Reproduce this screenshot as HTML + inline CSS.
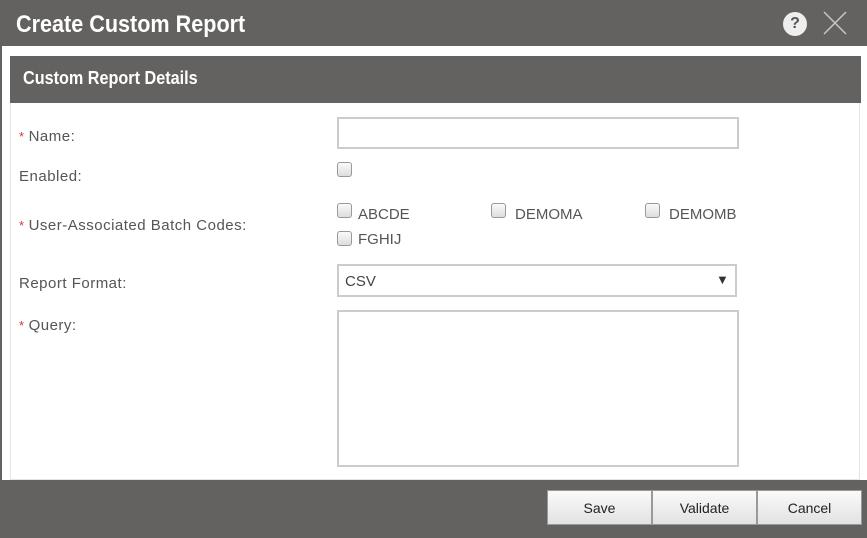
<!DOCTYPE html>
<html><head><style>
body{margin:0;width:867px;height:538px;overflow:hidden;background:#fff;font-family:"Liberation Sans",sans-serif;position:relative}
.a{position:absolute}
.lbl{position:absolute;left:19px;font-size:15px;color:#555;letter-spacing:0.5px}
.lbl b{color:#d33;font-weight:normal;font-size:13px;margin-right:4px}
.cb{position:absolute;width:13px;height:13px;border:1px solid #999;border-radius:3px;background:linear-gradient(#fafafa,#ddd)}
.ct{position:absolute;font-size:15px;color:#555}
.btn{position:absolute;top:490px;height:33px;width:103px;border:1px solid #999;background:linear-gradient(#fafafa,#e2e2e2);font-size:14px;text-align:center;line-height:35px;color:#222}
</style></head><body>
<div class="a" style="left:0;top:0;width:867px;height:46px;background:#636260"></div>
<div class="a" style="left:16px;top:11px;font-weight:bold;color:#fff;font-size:24px;transform:scaleX(0.9);transform-origin:left">Create Custom Report</div>
<div class="a" style="left:783px;top:12px;width:24px;height:24px;border-radius:50%;background:#eee;color:#555;font-weight:bold;font-size:16px;text-align:center;line-height:24px">?</div>
<svg class="a" style="left:823px;top:11px" width="24" height="24"><path d="M1 1L23 23M23 1L1 23" stroke="#c8c8c8" stroke-width="1.5"/></svg>
<div class="a" style="left:0;top:46px;width:2px;height:440px;background:#636260"></div>
<div class="a" style="left:10px;top:56px;width:850px;height:424px;border:1px solid #e4e4e4;border-top:none;box-sizing:border-box"></div>
<div class="a" style="left:10px;top:56px;width:851px;height:47px;background:#636260"></div>
<div class="a" style="left:23px;top:68px;font-weight:bold;color:#fff;font-size:18px;transform:scaleX(0.9);transform-origin:left">Custom Report Details</div>
<div class="lbl" style="top:128px"><b>*</b>Name:</div>
<div class="a" style="left:337px;top:117px;width:402px;height:32px;border:2px solid #ccc;box-sizing:border-box"></div>
<div class="lbl" style="top:168px">Enabled:</div>
<div class="cb" style="left:337px;top:162px"></div>
<div class="lbl" style="top:217px"><b>*</b>User-Associated Batch Codes:</div>
<div class="cb" style="left:337px;top:203px"></div><div class="ct" style="left:358px;top:206px">ABCDE</div>
<div class="cb" style="left:491px;top:203px"></div><div class="ct" style="left:515px;top:206px">DEMOMA</div>
<div class="cb" style="left:645px;top:203px"></div><div class="ct" style="left:669px;top:206px">DEMOMB</div>
<div class="cb" style="left:337px;top:231px"></div><div class="ct" style="left:358px;top:231px">FGHIJ</div>
<div class="lbl" style="top:275px">Report Format:</div>
<div class="a" style="left:337px;top:264px;width:400px;height:33px;border:2px solid #ccc;box-sizing:border-box;font-size:15px;color:#444;padding:7px 0 0 6px">CSV</div>
<div class="a" style="left:716px;top:272px;font-size:13px;color:#333">▼</div>
<div class="lbl" style="top:317px"><b>*</b>Query:</div>
<div class="a" style="left:337px;top:310px;width:402px;height:157px;border:2px solid #ccc;box-sizing:border-box"></div>
<div class="a" style="left:0;top:480px;width:867px;height:58px;background:#636260"></div>
<div class="btn" style="left:547px">Save</div>
<div class="btn" style="left:652px">Validate</div>
<div class="btn" style="left:757px">Cancel</div>
</body></html>
